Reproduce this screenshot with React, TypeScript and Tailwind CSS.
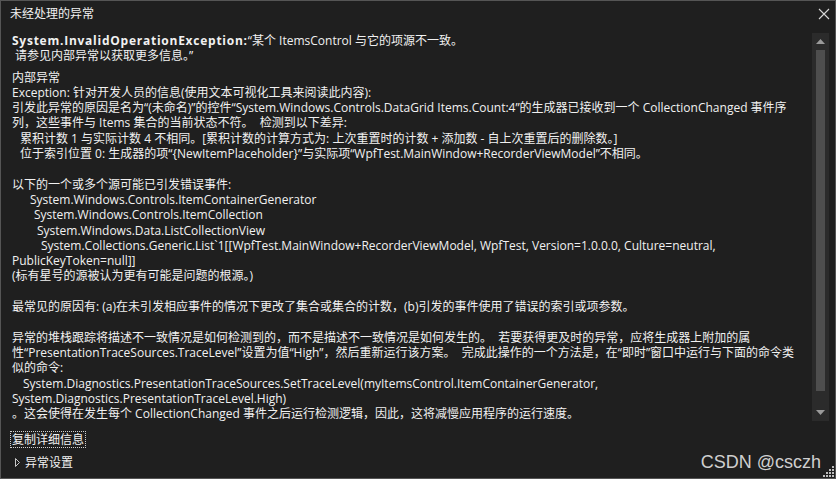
import React from "react";

const FONT = '"Open Sans", "Noto Sans CJK SC", sans-serif';

type Line = { text?: React.ReactNode; pl?: number };

const lines: Line[] = [
  {
    text: (
      <>
        <span className="font-bold tracking-[0.75px]">System.InvalidOperationException:</span>“某个 ItemsControl 与它的项源不一致。
      </>
    ),
  },
  { text: "请参见内部异常以获取更多信息。”", pl: 3 },
];

const inner: Line[] = [
  { text: "内部异常" },
  { text: "Exception: 针对开发人员的信息(使用文本可视化工具来阅读此内容):" },
  { text: "引发此异常的原因是名为“(未命名)”的控件“System.Windows.Controls.DataGrid Items.Count:4”的生成器已接收到一个 CollectionChanged 事件序" },
  { text: "列，这些事件与 Items 集合的当前状态不符。  检测到以下差异:" },
  { text: "累积计数 1 与实际计数 4 不相同。[累积计数的计算方式为: 上次重置时的计数 + 添加数 - 自上次重置后的删除数。]", pl: 8 },
  { text: "位于索引位置 0: 生成器的项“{NewItemPlaceholder}”与实际项“WpfTest.MainWindow+RecorderViewModel”不相同。", pl: 8 },
  {},
  { text: "以下的一个或多个源可能已引发错误事件:" },
  { text: "System.Windows.Controls.ItemContainerGenerator", pl: 18 },
  { text: "System.Windows.Controls.ItemCollection", pl: 22 },
  { text: "System.Windows.Data.ListCollectionView", pl: 25 },
  { text: "System.Collections.Generic.List`1[[WpfTest.MainWindow+RecorderViewModel, WpfTest, Version=1.0.0.0, Culture=neutral,", pl: 29 },
  { text: "PublicKeyToken=null]]" },
  { text: "(标有星号的源被认为更有可能是问题的根源。)" },
  {},
  { text: "最常见的原因有: (a)在未引发相应事件的情况下更改了集合或集合的计数，(b)引发的事件使用了错误的索引或项参数。" },
  {},
  { text: "异常的堆栈跟踪将描述不一致情况是如何检测到的，而不是描述不一致情况是如何发生的。  若要获得更及时的异常，应将生成器上附加的属" },
  { text: "性“PresentationTraceSources.TraceLevel”设置为值“High”，然后重新运行该方案。  完成此操作的一个方法是，在“即时”窗口中运行与下面的命令类" },
  { text: "似的命令:" },
  { text: "System.Diagnostics.PresentationTraceSources.SetTraceLevel(myItemsControl.ItemContainerGenerator,", pl: 11 },
  { text: "System.Diagnostics.PresentationTraceLevel.High)" },
  { text: "。这会使得在发生每个 CollectionChanged 事件之后运行检测逻辑，因此，这将减慢应用程序的运行速度。" },
];

function TextLine({ line }: { line: Line }) {
  return (
    <div className="h-[15.3px] whitespace-pre" style={line.pl ? { paddingLeft: line.pl } : undefined}>
      {line.text ?? " "}
    </div>
  );
}

function ScrollBar() {
  return (
    <div className="flex w-[17px] flex-col items-center bg-[#2b2b2b]">
      <div className="flex h-[17px] w-full items-center justify-center">
        <svg width="9" height="5" viewBox="0 0 9 5">
          <path d="M0 5 L4.5 0 L9 5 Z" fill="#9a9a9a" />
        </svg>
      </div>
      <div className="w-[9px] flex-1 bg-[#4e4e4e]" />
      <div className="h-[13px]" />
      <div className="flex h-[17px] w-full items-center justify-center">
        <svg width="9" height="5" viewBox="0 0 9 5">
          <path d="M0 0 L4.5 5 L9 0 Z" fill="#9a9a9a" />
        </svg>
      </div>
    </div>
  );
}

function Grip() {
  const dots: [number, number][] = [
    [9, 0],
    [6, 3], [9, 3],
    [3, 6], [6, 6], [9, 6],
    [0, 9], [3, 9], [6, 9], [9, 9],
  ];
  return (
    <svg width="11" height="11" viewBox="0 0 11 11">
      {dots.map(([x, y], i) => (
        <rect key={i} x={x} y={y} width="2" height="2" fill="#bdbdbd" />
      ))}
    </svg>
  );
}

export default function App() {
  return (
    <div
      className="relative flex h-[479px] w-[836px] flex-col border border-[#555] bg-[#1f1f1f] text-[12px] text-[#f1f1f1]"
      style={{ fontFamily: FONT }}
    >
      <div className="flex h-[25px] items-center justify-between pl-[9px] pr-[5px]">
        <span className="text-[12px] text-[#f1f1f1]">未经处理的异常</span>
        <svg width="12" height="12" viewBox="0 0 12 12">
          <path d="M1 1 L11 11 M11 1 L1 11" stroke="#d8d8d8" strokeWidth="1.1" />
        </svg>
      </div>

      <div className="flex h-[395px] pt-[7px] pr-[6px]">
        <div className="flex-1 overflow-hidden pl-[11px] leading-[15.3px]">
          {lines.map((l, i) => (
            <TextLine key={i} line={l} />
          ))}
          <div className="h-[6px]" />
          {inner.map((l, i) => (
            <TextLine key={i} line={l} />
          ))}
        </div>
        <ScrollBar />
      </div>

      <div className="flex flex-col items-start pl-[9px] pt-[10px]">
        <button className="border border-dotted border-[#cfcfcf] px-[1px] leading-[15px] text-[#f1f1f1]">
          复制详细信息
        </button>
        <div className="mt-[7px] flex items-center gap-[5px] pl-[5px] leading-[15px]">
          <svg width="5" height="9" viewBox="0 0 5 9">
            <path d="M0.5 0.5 L4.5 4.5 L0.5 8.5 Z" fill="none" stroke="#c8c8c8" strokeWidth="1" />
          </svg>
          <span>异常设置</span>
        </div>
      </div>

      <div
        className="absolute bottom-[7px] right-[14px] text-[18px] leading-none text-[#cfcfcf]"
        style={{ fontFamily: '"Liberation Sans", Arial, sans-serif' }}
      >
        CSDN @csczh
      </div>
      <div className="absolute bottom-[1px] right-[1px] flex">
        <Grip />
      </div>
    </div>
  );
}
